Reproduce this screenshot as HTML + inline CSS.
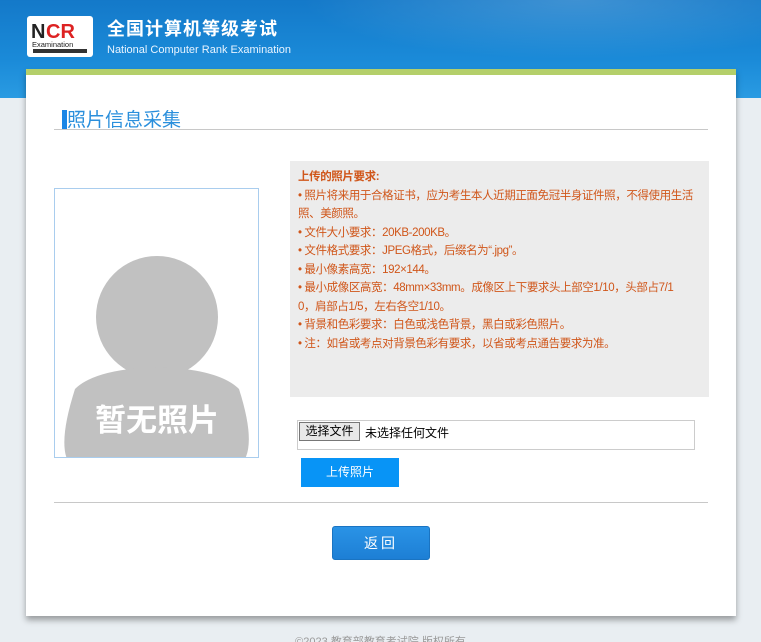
<!DOCTYPE html>
<html><head><meta charset="utf-8"><style>
*{margin:0;padding:0;box-sizing:border-box}
html,body{width:761px;height:642px;overflow:hidden}
body{background:#e9eef2;font-family:"Liberation Sans","Noto Sans CJK SC",sans-serif;position:relative}
.hdr{position:absolute;left:0;top:0;width:761px;height:98px;background:linear-gradient(180deg,#1479c9 0%,#1a8ad8 60%,#2a9be2 100%)}
.hdr:after{content:"";position:absolute;left:300px;top:0;width:461px;height:60px;background:radial-gradient(ellipse at 60% 0%,rgba(255,255,255,.18),transparent 70%)}
.logo{position:absolute;left:27px;top:16px;width:66px;height:41px;background:#fff;border-radius:3px}
.t1{position:absolute;left:107px;top:18px;color:#fff;font-size:18px;line-height:22px;font-weight:bold;letter-spacing:1px}
.t2{position:absolute;left:107px;top:44px;color:#e8f4ff;font-size:11px;line-height:13px}
.card{position:absolute;left:26px;top:69px;width:710px;height:547px;background:#fff;border-top:6px solid #b4cf6a;box-shadow:0 4px 6px rgba(0,0,0,.35)}
.ttl{position:absolute;left:36px;top:30px;font-size:19px;color:#2a8fdc}
.ttl b{display:inline-block;width:5px;height:19px;background:#1a86e6;vertical-align:-3px}
.hl{position:absolute;left:28px;width:654px;height:1px;background:#c8c8c8}
.ph{position:absolute;left:28px;top:113px;width:205px;height:270px;border:1px solid #a9cdee;overflow:hidden}
.req{position:absolute;left:264px;top:86px;width:419px;height:236px;background:#ececec;padding:7px 8px;color:#d0561a;font-size:11.5px;letter-spacing:-0.4px;line-height:18.5px;white-space:nowrap;overflow:hidden}
.file{position:absolute;left:271px;top:345px;width:398px;height:30px;border:1px solid #ccc;font-size:12px}
.fb{position:absolute;left:1px;top:1px;width:61px;height:19px;border:1px solid #777;background:#e8e8e8;text-align:center;line-height:17px}
.up{position:absolute;left:275px;top:383px;width:98px;height:29px;background:#0894f6;color:#fff;font-size:12px;text-align:center;line-height:29px}
.back{position:absolute;left:306px;top:451px;width:98px;height:34px;border-radius:3px;background:linear-gradient(#2a93e6,#1d7fd5);border:1px solid #1a74c2;color:#fff;font-size:14px;text-align:center;line-height:32px;letter-spacing:3px}
.ft{position:absolute;left:0;width:761px;top:636px;text-align:center;font-size:11px;line-height:13px;color:#999}
</style></head><body>
<div class="hdr"></div>
<div class="logo"><svg width="66" height="41"><text x="4" y="22" font-size="20" font-weight="bold" fill="#222" font-family="Liberation Sans">N</text><text x="19" y="22" font-size="20" font-weight="bold" fill="#d22" font-family="Liberation Sans">CR</text><text x="5" y="31" font-size="7.5" fill="#222" font-family="Liberation Sans">Examination</text><rect x="6" y="33" width="54" height="4" fill="#333"/></svg></div>
<div class="t1">全国计算机等级考试</div>
<div class="t2">National Computer Rank Examination</div>
<div class="card">
<div class="ttl"><b></b>照片信息采集</div>
<div class="hl" style="top:54px"></div>
<div class="ph"><svg width="205" height="270"><circle cx="102" cy="128" r="61" fill="#c1c1c1"/><path d="M20 200 Q40 180 102 178 Q164 180 184 200 Q200 250 190 270 L12 270 Q4 250 20 200Z" fill="#c1c1c1"/><text x="102" y="242" text-anchor="middle" font-size="31" font-weight="bold" fill="#fff" font-family="Noto Sans CJK SC">暂无照片</text></svg></div>
<div class="req"><b>上传的照片要求:</b><br>• 照片将来用于合格证书，应为考生本人近期正面免冠半身证件照，不得使用生活<br>照、美颜照。<br>• 文件大小要求：20KB-200KB。<br>• 文件格式要求：JPEG格式，后缀名为“.jpg”。<br>• 最小像素高宽：192×144。<br>• 最小成像区高宽：48mm×33mm。成像区上下要求头上部空1/10，头部占7/1<br>0，肩部占1/5，左右各空1/10。<br>• 背景和色彩要求：白色或浅色背景，黑白或彩色照片。<br>• 注：如省或考点对背景色彩有要求，以省或考点通告要求为准。</div>
<div class="file"><div class="fb">选择文件</div><span style="position:absolute;left:67px;top:3px">未选择任何文件</span></div>
<div class="up">上传照片</div>
<div class="hl" style="top:427px"></div>
<div class="back">返回</div>
</div>
<div class="ft">©2023 教育部教育考试院 版权所有</div>
</body></html>
